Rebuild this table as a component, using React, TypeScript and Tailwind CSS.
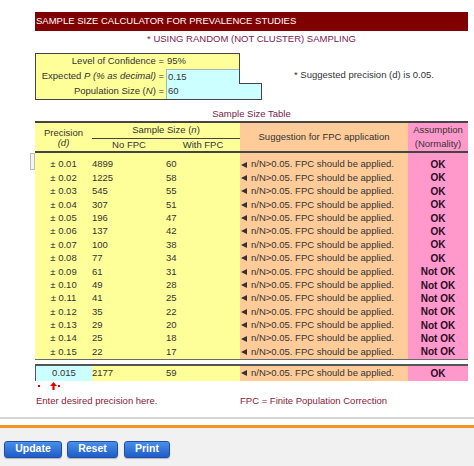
import React from "react";

const ROWS = [
  ["0.01", "4899", "60", "OK"],
  ["0.02", "1225", "58", "OK"],
  ["0.03", "545", "55", "OK"],
  ["0.04", "307", "51", "OK"],
  ["0.05", "196", "47", "OK"],
  ["0.06", "137", "42", "OK"],
  ["0.07", "100", "38", "OK"],
  ["0.08", "77", "34", "OK"],
  ["0.09", "61", "31", "Not OK"],
  ["0.10", "49", "28", "Not OK"],
  ["0.11", "41", "25", "Not OK"],
  ["0.12", "35", "22", "Not OK"],
  ["0.13", "29", "20", "Not OK"],
  ["0.14", "25", "18", "Not OK"],
  ["0.15", "22", "17", "Not OK"],
];

const COLS = "grid grid-cols-[57px_74px_74px_168px_60px]";

function Tri() {
  return (
    <svg width="6" height="6" viewBox="0 0 6 6" className="shrink-0">
      <polygon points="0,3 6,0 6,6" fill="#333" />
    </svg>
  );
}

function Suggestion() {
  return (
    <div className="flex items-center pl-[1px] gap-[4px] whitespace-nowrap">
      <Tri />
      <span>n/N&gt;0.05. FPC should be applied.</span>
    </div>
  );
}

export default function App() {
  return (
    <div className="w-[474px] h-[466px] overflow-hidden bg-white flex flex-col font-['Liberation_Sans',Arial,sans-serif] text-[9.5px] text-[#333]">
      <div className="ml-[35px] w-[433px] pt-[12px]">
        <div className="h-[19px] bg-[#800000] text-white flex items-center pl-[1px] text-[9.5px]">
          SAMPLE SIZE CALCULATOR FOR PREVALENCE STUDIES
        </div>
        <div className="h-[16px] flex items-center justify-center text-[#802050]">
          * USING RANDOM (NOT CLUSTER) SAMPLING
        </div>

        {/* inputs */}
        <div className="mt-[6px] flex items-center">
          <div className="w-[227px]">
            <div className="w-[205px] h-[16px] flex items-center bg-[#ffff99] border-t border-l border-r border-[#444]">
              <span className="w-[130px] text-right pr-[2px]">Level of Confidence =</span>
              <span className="pl-[1px]">95%</span>
            </div>
            <div className="flex h-[15px]">
              <div className="w-[205px] flex bg-[#ffff99] border-l border-r border-[#444]">
                <span className="w-[130px] text-right pr-[2px] self-center">
                  Expected <i>P</i> <i>(% as decimal)</i> =
                </span>
                <span className="flex-1 bg-[#ccffff] border-t border-l border-[#a8b8b8] flex items-center pl-[1px]">0.15</span>
              </div>
              <div className="w-[22px] border-b border-[#444]" />
            </div>
            <div className="w-[227px] h-[16px] flex bg-[#ffff99] border-l border-r border-b border-[#444]">
              <span className="w-[130px] text-right pr-[2px] self-center">
                Population Size (<i>N</i>) =
              </span>
              <span className="flex-1 bg-[#ccffff] border-l border-[#a8b8b8] flex items-center pl-[1px]">60</span>
            </div>
          </div>
          <div className="ml-[32px] -mt-[3px]">* Suggested precision (d) is 0.05.</div>
        </div>

        <div className="mt-[7px] h-[14px] flex items-center justify-center text-[#7a2248]">Sample Size Table</div>

        {/* header */}
        <div className={`${COLS} grid-rows-[16px_12px] border-t-2 border-b-2 border-[#444]`}>
          <div className="row-span-2 bg-[#ffff99] flex flex-col items-center justify-center leading-[10px] pt-[1px]">
            <span>Precision</span>
            <span><i>(d)</i></span>
          </div>
          <div className="col-span-2 bg-[#ffff99] border-b border-[#444] flex items-center justify-center">
            Sample Size (<i>n</i>)
          </div>
          <div className="row-span-2 bg-[#ffcc99] flex items-center justify-center">Suggestion for FPC application</div>
          <div className="row-span-2 bg-[#ff99cc] flex flex-col items-center justify-center leading-[14px]">
            <span>Assumption</span>
            <span>(Normality)</span>
          </div>
          <div className="bg-[#ffff99] flex items-center justify-center">No FPC</div>
          <div className="bg-[#ffff99] flex items-center justify-center">With FPC</div>
        </div>

        {/* body */}
        <div className="relative border-b-2 border-[#6a6a6a]">
          <div className="absolute -left-[5px] top-0 w-[5px] h-[17px] border border-[#bbb] bg-[#f3f3f3]" />
          <div className={`${COLS} h-[4px]`}>
            <div className="bg-[#ffff99]" />
            <div className="bg-[#ffff99]" />
            <div className="bg-[#ffff99]" />
            <div className="bg-[#ffcc99]" />
            <div className="bg-[#ff99cc]" />
          </div>
          {ROWS.map(([d, n1, n2, ok]) => (
            <div key={d} className={`${COLS} h-[13.4px]`}>
              <div className="bg-[#ffff99] flex items-center justify-center">± {d}</div>
              <div className="bg-[#ffff99] flex items-center">{n1}</div>
              <div className="bg-[#ffff99] flex items-center">{n2}</div>
              <div className="bg-[#ffcc99] flex items-center">
                <Suggestion />
              </div>
              <div className="bg-[#ff99cc] flex items-center justify-center font-bold text-[10px] text-[#2a0c1e]">{ok}</div>
            </div>
          ))}
        </div>

        {/* entered precision */}
        <div className={`${COLS} mt-[4px] h-[17px] border-t-2 border-b border-t-[#555] border-b-[#999]`}>
          <div className="bg-[#ccffff] border-l border-[#555] flex items-center justify-center">0.015</div>
          <div className="bg-[#ffff99] flex items-center">2177</div>
          <div className="bg-[#ffff99] flex items-center">59</div>
          <div className="bg-[#ffcc99] flex items-center">
            <Suggestion />
          </div>
          <div className="bg-[#ff99cc] flex items-center justify-center font-bold text-[10px] text-[#2a0c1e]">OK</div>
        </div>

        <div className="h-[10px] flex items-center pl-[3px]">
          <div className="w-[2px] h-[2px] bg-[#e00000]" />
          <svg width="7" height="8" viewBox="0 0 7 8" className="ml-[10px]">
            <path d="M3.5 0 L7 4 L4.6 4 L4.6 8 L2.4 8 L2.4 4 L0 4 Z" fill="#e00000" />
          </svg>
          <div className="ml-[1px] w-[2px] h-[1.5px] bg-[#e00000]" />
        </div>
        <div className="mt-[3px] h-[14px] flex items-center text-[#882233]">
          <span className="w-[205px] pl-[1px]">Enter desired precision here.</span>
          <span>FPC = Finite Population Correction</span>
        </div>
      </div>

      <div className="mt-[9px] h-[2px] bg-[#d6d6d6]" />
      <div className="mt-[6px] h-[3px] bg-[#f7941d]" />
      <div className="flex-1 bg-[#f1f1f1] pt-[13px] pl-[4px] flex items-start">
        <button className="w-[58px] h-[17px] rounded-[3px] border border-[#1d4fa8] bg-linear-to-b from-[#4a8fe8] to-[#1f5cc8] text-white font-bold text-[10.5px] flex items-center justify-center shadow-[0_1px_1px_rgba(0,0,0,0.25)]">
          Update
        </button>
        <button className="ml-[5px] w-[51px] h-[17px] rounded-[3px] border border-[#1d4fa8] bg-linear-to-b from-[#4a8fe8] to-[#1f5cc8] text-white font-bold text-[10.5px] flex items-center justify-center shadow-[0_1px_1px_rgba(0,0,0,0.25)]">
          Reset
        </button>
        <button className="ml-[6px] w-[46px] h-[17px] rounded-[3px] border border-[#1d4fa8] bg-linear-to-b from-[#4a8fe8] to-[#1f5cc8] text-white font-bold text-[10.5px] flex items-center justify-center shadow-[0_1px_1px_rgba(0,0,0,0.25)]">
          Print
        </button>
      </div>
    </div>
  );
}
